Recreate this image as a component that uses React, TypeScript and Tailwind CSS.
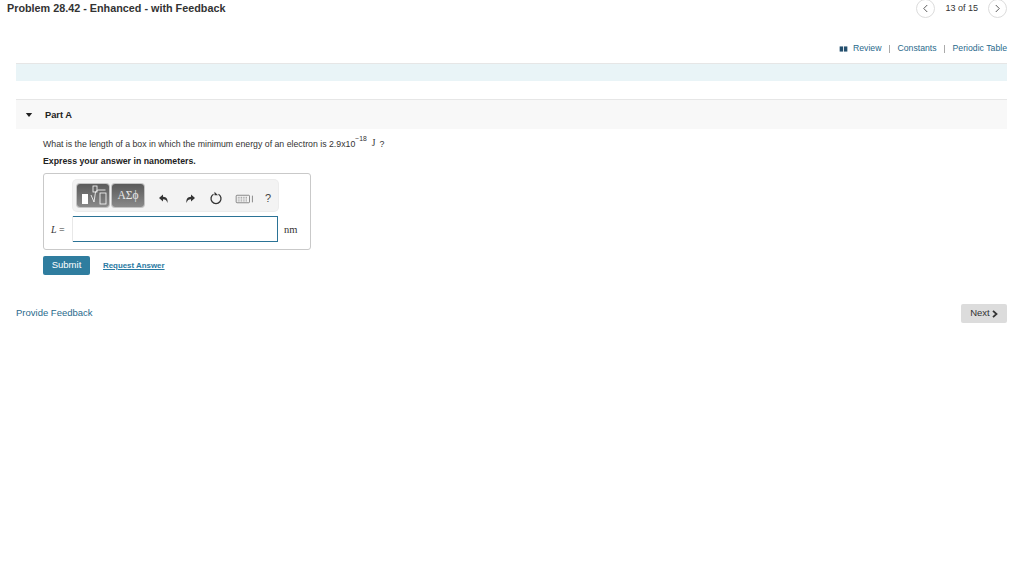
const sans = "font-['Liberation_Sans',Arial,sans-serif]";
const serif = "font-['Liberation_Serif','Times_New_Roman',serif]";

const Chevron = ({ dir }: { dir: "left" | "right" }) => (
  <svg viewBox="0 0 8 10" className="h-[9px] w-[7px]" fill="none" stroke="#555" strokeWidth="1.1">
    <path d={dir === "left" ? "M6 1 2 5l4 4" : "M2 1l4 4-4 4"} />
  </svg>
);

const PagerButton = ({ dir }: { dir: "left" | "right" }) => (
  <button className="flex h-[19px] w-[19px] items-center justify-center rounded-full border border-[#dcdcdc] bg-white">
    <Chevron dir={dir} />
  </button>
);

const Divider = () => <span className="mx-[7.500px] h-[8px] w-px bg-[#aaa]" />;

const TemplateButton = ({ children, className }: { children: React.ReactNode; className: string }) => (
  <button
    className={`flex h-[23px] items-center justify-center rounded-[3px] bg-gradient-to-b from-[#5a5a5a] to-[#8a8a8a] shadow-[0_0_0_1px_#c4c4c4] ${className}`}
  >
    {children}
  </button>
);

const Toolbar = () => (
  <div className="flex h-[31px] w-[205px] items-center rounded-[4px] bg-[#f3f3f3] pl-[4px] shadow-[0_0_0_1px_#ececec]">
    <TemplateButton className="w-[32px]">
      <svg viewBox="0 0 32 22" className="h-[22px] w-[32px]" fill="none">
        <rect x="5" y="9" width="6" height="10" fill="#fff" />
        <rect x="16" y="1" width="4" height="6" stroke="#fff" strokeWidth="0.8" />
        <path d="M14 10l3 7 1.500-10 2-2h8" stroke="#fff" strokeWidth="0.8" />
        <rect x="23" y="8" width="6" height="11" stroke="#fff" strokeWidth="0.8" />
      </svg>
    </TemplateButton>
    <TemplateButton className="ml-[3px] w-[32px]">
      <span className={`${serif} text-[11.500px] leading-none text-[#e8e8e8]`}>AΣϕ</span>
    </TemplateButton>
    <svg viewBox="0 0 12 12" className="ml-[14px] mt-[6px] h-[12px] w-[12px]" fill="#333">
      <path d="M5 1.500 1 5l4 3.500V6.200c2.400 0 3.700.9 4.400 3.800.8-3.600-.9-6-4.400-6.200z" />
    </svg>
    <svg viewBox="0 0 12 12" className="ml-[14px] mt-[6px] h-[12px] w-[12px]" fill="#333">
      <path d="M7 1.500 11 5 7 8.500V6.200c-2.400 0-3.700.9-4.400 3.800C1.800 6.400 3.500 4 7 3.800z" />
    </svg>
    <svg viewBox="0 0 14 14" className="ml-[13px] mt-[5px] h-[14px] w-[14px]" fill="none" stroke="#333" strokeWidth="1.300">
      <path d="M9.500 3.200a5 5 0 1 1-5 0" />
      <path d="M5.500 0.800v3.400H9" fill="#333" stroke="none" />
    </svg>
    <svg viewBox="0 0 22 12" className="ml-[12px] mt-[6px] h-[10px] w-[19px]" fill="none" stroke="#666" strokeWidth="0.9">
      <rect x="1" y="1.500" width="16" height="9" rx="1" />
      <path d="M3 4h12M3 6h12M3 8.300h12" strokeDasharray="1 1" />
      <path d="M20.500 2v8" />
    </svg>
    <span className={`${sans} ml-[11px] mt-[6px] text-[11px] leading-none text-[#444]`}>?</span>
  </div>
);

export default function App() {
  return (
    <div className={`${sans} min-h-[563px] bg-white text-[#222]`}>
      <header className="flex h-[17px] items-center justify-between pl-[7px] pr-[17px]">
        <h1 className="text-[10.800px] font-bold leading-none text-[#333]">Problem 28.42 - Enhanced - with Feedback</h1>
        <div className="flex items-center">
          <PagerButton dir="left" />
          <span className="mx-[10px] pt-[1px] text-[9px] text-[#333]">13 of 15</span>
          <PagerButton dir="right" />
        </div>
      </header>

      <nav className="mt-[25px] flex h-[14px] items-center justify-end pr-[17px] text-[8.700px] text-[#2a6a8c]">
        <svg viewBox="0 0 9 7" className="mr-[5px] h-[6px] w-[9px]" fill="#24506e">
          <rect x="0" y="0.500" width="4" height="6" />
          <rect x="5" y="0.500" width="4" height="6" />
        </svg>
        <a>Review</a>
        <Divider />
        <a>Constants</a>
        <Divider />
        <a>Periodic Table</a>
      </nav>

      <main className="px-[16px] pr-[17px]">
        <div className="mt-[7px] h-[18px] border-t border-[#e6e6e6] bg-[#e9f4f7]" />

        <section className="mt-[18px]">
          <div className="flex h-[30px] items-center border-t border-[#e6e6e6] bg-[#f8f8f8]">
            <svg viewBox="0 0 8 5" className="ml-[9px] h-[4px] w-[8px]" fill="#222">
              <path d="M0 0h8L4 5z" />
            </svg>
            <h2 className="ml-[12px] pt-[2px] text-[9.300px] font-bold text-[#222]">Part A</h2>
          </div>

          <div className="pl-[27px]">
            <p className="mt-[8px] flex h-[14px] items-center text-[8.750px] leading-none text-[#333]">
              What is the length of a box in which the minimum energy of an electron is 2.9x10
              <sup className="mb-[3px] text-[6.800px] leading-none">−18</sup>
              <span className={`${serif} ml-[5px] text-[9.500px]`}>J</span>
              <span className="ml-[4px]">?</span>
            </p>
            <p className="mt-[4px] text-[8.750px] font-bold leading-[12px] text-[#222]">
              Express your answer in nanometers.
            </p>

            <div className="mt-[6px] h-[77px] w-[268px] rounded-[3px] border border-[#c9c9c9] pl-[29px] pt-[6px]">
              <Toolbar />
              <div className="mt-[5px] flex items-center">
                <span className={`${serif} -ml-[22px] w-[22px] text-[10px] italic text-[#333]`}>
                  L <span className="not-italic">=</span>
                </span>
                <div className="h-[26px] w-[205px] border border-l-0 border-[#2b7396] bg-white shadow-[-1px_0_0_#e8e8e8]" />
                <span className={`${serif} ml-[6px] pt-[1px] text-[10.500px] text-[#333]`}>nm</span>
              </div>
            </div>

            <div className="mt-[6px] flex items-center">
              <button className="flex h-[19px] w-[47px] items-center justify-center rounded-[2px] bg-[#2f7d9f] text-[9.500px] text-white">
                Submit
              </button>
              <a className="ml-[13px] text-[7.900px] font-bold text-[#2a7aa3] underline">Request Answer</a>
            </div>
          </div>
        </section>

        <footer className="mt-[29px] flex items-center justify-between">
          <a className="text-[9.500px] text-[#2a6a8c]">Provide Feedback</a>
          <button className="flex h-[19px] w-[46px] items-center justify-center gap-[2px] rounded-[2px] bg-[#dcdcdc] text-[9.500px] text-[#333]">
            Next
            <svg viewBox="0 0 6 8" className="h-[8px] w-[6px]" fill="none" stroke="#333" strokeWidth="1.800">
              <path d="M1 .8 4.500 4 1 7.200" />
            </svg>
          </button>
        </footer>
      </main>
    </div>
  );
}
